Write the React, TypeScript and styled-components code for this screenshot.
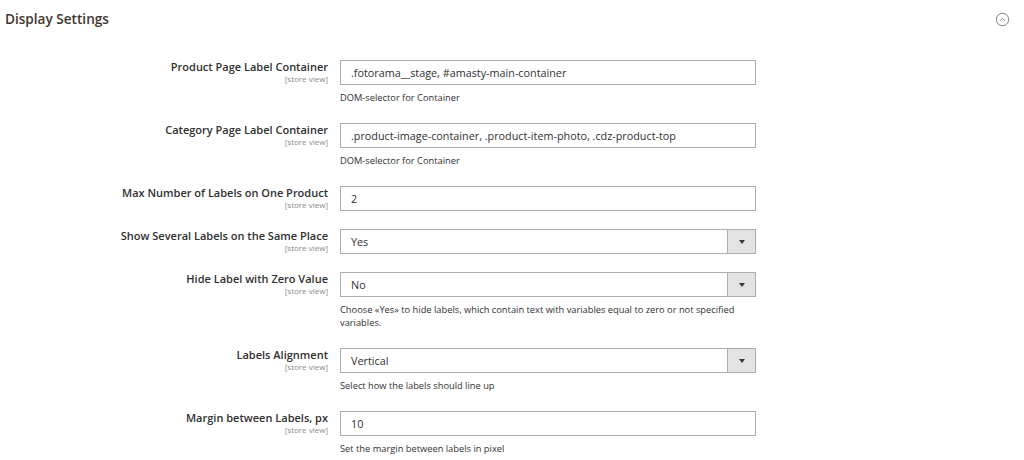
import React from "react";
import styled, { createGlobalStyle } from "styled-components";

const Global = createGlobalStyle`
  html, body { margin: 0; padding: 0; background: #ffffff; }
  body { font-family: "Open Sans", "Noto Sans", Arial, sans-serif; color: #303030; }
  * { box-sizing: border-box; }
`;

const Page = styled.div`
  width: 1024px;
  height: 460px;
  overflow: hidden;
  background: #fff;
`;

const Header = styled.div`
  display: flex;
  align-items: center;
  justify-content: space-between;
  height: 37px;
  padding: 0 14px 0 5px;
`;

const Title = styled.h2`
  margin: 0;
  font-size: 13.6px;
  font-weight: 600;
  color: #41362f;
`;

const Toggle = styled.svg`
  width: 15px;
  height: 15px;
  display: block;
  margin-top: 1px;
`;

const Fields = styled.div`
  display: flex;
  flex-direction: column;
  gap: 18px;
  padding-top: 23px;
`;

const Row = styled.div`
  display: grid;
  grid-template-columns: 328px 416px;
  column-gap: 12px;
  align-items: start;
`;

const LabelCell = styled.div`
  display: flex;
  flex-direction: column;
  align-items: flex-end;
  text-align: right;
`;

const LabelText = styled.label`
  font-size: 11px;
  font-weight: 600;
  color: #303030;
  line-height: 14px;
`;

const Scope = styled.span`
  font-size: 8px;
  color: #8a8a8a;
  line-height: 9px;
`;

const Control = styled.div`
  display: flex;
  flex-direction: column;
`;

const Input = styled.div`
  height: 25px;
  border: 1px solid #adadad;
  display: flex;
  align-items: center;
  padding-left: 10px;
  font-size: 10.8px;
  color: #303030;
  background: #fff;
`;

const Select = styled.div`
  height: 25px;
  border: 1px solid #adadad;
  display: flex;
  align-items: stretch;
  font-size: 10.8px;
  color: #303030;
  background: #fff;
`;

const SelectValue = styled.div`
  flex: 1;
  display: flex;
  align-items: center;
  padding-left: 10px;
`;

const SelectButton = styled.div`
  width: 28px;
  background: #e3e3e3;
  border-left: 1px solid #adadad;
  display: flex;
  align-items: center;
  justify-content: center;
`;

const Arrow = styled.span`
  width: 0;
  height: 0;
  border-left: 3.5px solid transparent;
  border-right: 3.5px solid transparent;
  border-top: 4px solid #41362f;
`;

const Note = styled.div`
  margin: 6px 0 1px;
  font-size: 9.3px;
  line-height: 13px;
  color: #303030;
`;

type Field = {
  label: string;
  value: string;
  select?: boolean;
  note?: string;
};

const fields: Field[] = [
  { label: "Product Page Label Container", value: ".fotorama__stage, #amasty-main-container", note: "DOM-selector for Container" },
  { label: "Category Page Label Container", value: ".product-image-container, .product-item-photo, .cdz-product-top", note: "DOM-selector for Container" },
  { label: "Max Number of Labels on One Product", value: "2" },
  { label: "Show Several Labels on the Same Place", value: "Yes", select: true },
  {
    label: "Hide Label with Zero Value",
    value: "No",
    select: true,
    note: "Choose «Yes» to hide labels, which contain text with variables equal to zero or not specified variables.",
  },
  { label: "Labels Alignment", value: "Vertical", select: true, note: "Select how the labels should line up" },
  { label: "Margin between Labels, px", value: "10", note: "Set the margin between labels in pixel" },
];

export default function App() {
  return (
    <Page>
      <Global />
      <Header>
        <Title>Display Settings</Title>
        <Toggle viewBox="0 0 16 16">
          <circle cx="8" cy="8" r="6.6" fill="none" stroke="#7a7a7a" strokeWidth="1" />
          <path d="M5.4 9.3 L8 6.7 L10.6 9.3" fill="none" stroke="#7a7a7a" strokeWidth="1" />
        </Toggle>
      </Header>
      <Fields>
        {fields.map((f) => (
          <Row key={f.label}>
            <LabelCell>
              <LabelText>{f.label}</LabelText>
              <Scope>[store view]</Scope>
            </LabelCell>
            <Control>
              {f.select ? (
                <Select>
                  <SelectValue>{f.value}</SelectValue>
                  <SelectButton>
                    <Arrow />
                  </SelectButton>
                </Select>
              ) : (
                <Input>{f.value}</Input>
              )}
              {f.note && <Note>{f.note}</Note>}
            </Control>
          </Row>
        ))}
      </Fields>
    </Page>
  );
}
